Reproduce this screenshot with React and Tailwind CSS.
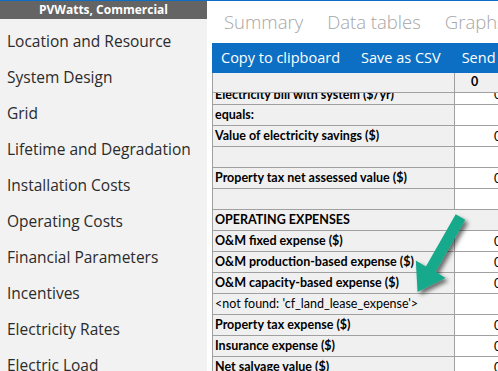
import React from 'react';

const navItems = [
  'Location and Resource',
  'System Design',
  'Grid',
  'Lifetime and Degradation',
  'Installation Costs',
  'Operating Costs',
  'Financial Parameters',
  'Incentives',
  'Electricity Rates',
  'Electric Load',
];

// type: 'row' shows a value cell, 'blank' is an empty spacer, 'section' spans the table
const rows = [
  { label: 'equals:', type: 'row', val: '' },
  { label: 'Value of electricity savings ($)', type: 'row', val: '0' },
  { label: '', type: 'blank' },
  { label: 'Property tax net assessed value ($)', type: 'row', val: '0' },
  { label: '', type: 'blank' },
  { label: 'OPERATING EXPENSES', type: 'section' },
  { label: 'O&M fixed expense ($)', type: 'row', val: '0' },
  { label: 'O&M production-based expense ($)', type: 'row', val: '0' },
  { label: 'O&M capacity-based expense ($)', type: 'row', val: '0' },
  { label: "<not found: 'cf_land_lease_expense'>", type: 'row', val: '', plain: true },
  { label: 'Property tax expense ($)', type: 'row', val: '0' },
  { label: 'Insurance expense ($)', type: 'row', val: '0' },
  { label: 'Net salvage value ($)', type: 'row', val: '0' },
];

function Sidebar() {
  return (
    <div className="w-[207px] shrink-0 bg-[#f2f2f2] flex flex-col">
      <div className="h-[23px] bg-[#646464] text-white font-bold text-[12px] flex items-center justify-center">
        PVWatts, Commercial
      </div>
      <div className="flex flex-col pt-[5px]">
        {navItems.map((item) => (
          <div key={item} className="h-[36px] shrink-0 flex items-center pl-[7px] text-[15.5px] text-[#2b2b2b] whitespace-nowrap">
            {item}
          </div>
        ))}
      </div>
    </div>
  );
}

function Arrow() {
  return (
    <svg className="absolute left-0 top-0 pointer-events-none" width="498" height="371" viewBox="0 0 498 371">
      <defs>
        <filter id="sh" x="-50%" y="-50%" width="200%" height="200%">
          <feDropShadow dx="3" dy="3" stdDeviation="2" floodColor="#000" floodOpacity="0.55" />
        </filter>
      </defs>
      <polygon
        points="455.7,214.3 465.3,219.7 435.5,271.8 445.5,278 417.5,292 415.8,260.5 425.9,266.4"
        fill="#17a98b"
        filter="url(#sh)"
      />
    </svg>
  );
}

function DataTable() {
  return (
    <div className="ml-[5px] flex flex-col text-[12.5px] text-black" style={{ fontFamily: 'Lato, "Open Sans", sans-serif' }}>
      <div className="h-[20px] shrink-0 flex border-l border-b border-[#a0a0a0] bg-[#f0f0f0]">
        <div className="w-[242px] border-r border-[#a0a0a0]"></div>
        <div className="flex-1 flex items-center justify-center font-bold pr-[4px]">0</div>
      </div>
      <div className="h-[12px] shrink-0 flex border-l border-b border-[#a0a0a0] overflow-hidden">
        <div className="w-[242px] bg-[#f0f0f0] border-r border-[#a0a0a0] font-bold pl-[2px] leading-[15px] -mt-[6px] h-[18px] whitespace-nowrap">
          Electricity bill with system ($/yr)
        </div>
        <div className="flex-1 bg-white -mt-[6px] leading-[15px] relative">
          <span className="absolute left-[39px] top-0">0</span>
        </div>
      </div>
      {rows.map((r, i) =>
        r.type === 'section' ? (
          <div key={i} className="h-[21px] shrink-0 flex items-center border-l border-b border-[#a0a0a0] bg-[#f0f0f0] font-bold pl-[2px]">
            {r.label}
          </div>
        ) : (
          <div key={i} className="h-[21px] shrink-0 flex border-l border-b border-[#a0a0a0]">
            <div className={`w-[242px] shrink-0 bg-[#f0f0f0] border-r border-[#a0a0a0] flex items-center pl-[2px] whitespace-nowrap ${r.plain ? 'font-normal' : 'font-bold'}`}>
              {r.label}
            </div>
            <div className="flex-1 bg-white relative">
              {r.val && <span className="absolute left-[39px] top-[2px]">{r.val}</span>}
            </div>
          </div>
        )
      )}
    </div>
  );
}

export default function App() {
  return (
    <div className="relative w-[498px] h-[371px] overflow-hidden bg-white" style={{ fontFamily: '"Open Sans", "Noto Sans", sans-serif' }}>
      <div className="h-px bg-[#0c6fc4]"></div>
      <div className="flex h-[370px]">
        <Sidebar />
        <div className="flex-1 bg-white flex flex-col overflow-hidden">
          <div className="h-[42px] shrink-0 flex items-center gap-[24px] pl-[17px] text-[18.5px] font-light text-[#a6a6a6] whitespace-nowrap">
            <span>Summary</span>
            <span>Data tables</span>
            <span>Graphs</span>
          </div>
          <div className="ml-[5px] h-[30px] shrink-0 bg-[#0c6fc4] flex items-center gap-[21px] pl-[9px] text-[14.5px] text-white whitespace-nowrap">
            <span>Copy to clipboard</span>
            <span>Save as CSV</span>
            <span>Send to Excel</span>
          </div>
          <DataTable />
        </div>
      </div>
      <Arrow />
    </div>
  );
}
